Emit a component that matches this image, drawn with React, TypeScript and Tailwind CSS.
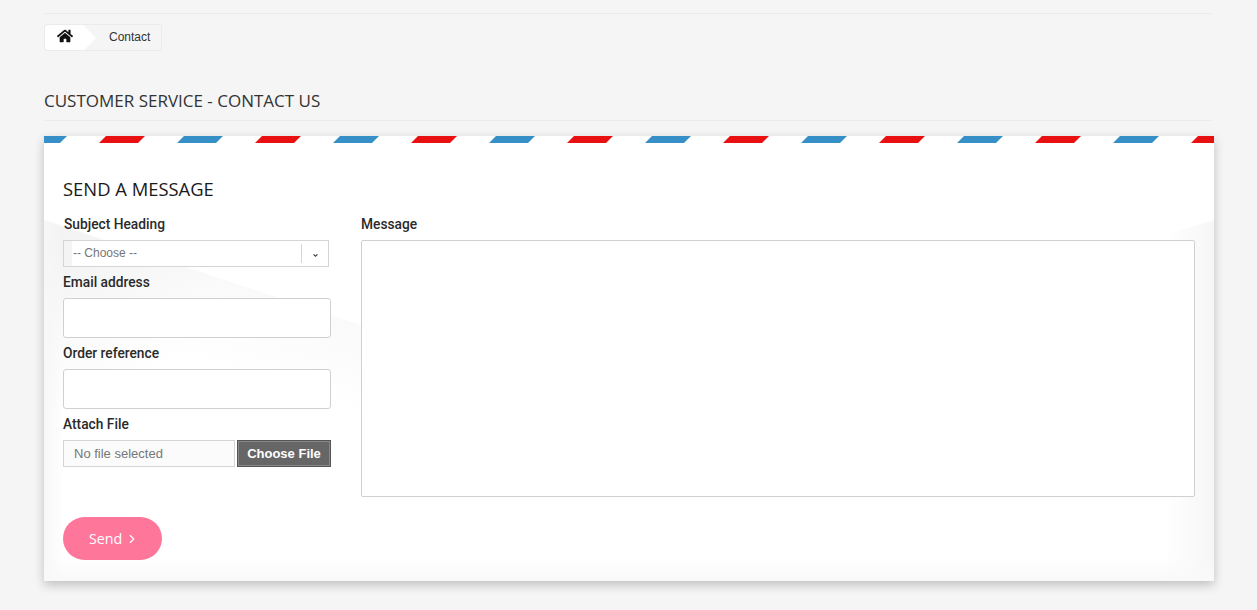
import { FaHome, FaAngleDown } from "react-icons/fa";
import { ChevronRight } from "lucide-react";

const sans = "font-['Liberation_Sans',Arial,sans-serif]";
const open = "font-['Open_Sans',sans-serif]";
const labelCls = "block h-[16px] leading-[16px] text-[13.75px] font-medium text-[#2a2a2a] font-['Roboto',sans-serif]";

function Stripes() {
  const items = [];
  for (let i = 0; i < 8; i++) {
    const b = i * 156 - 23;
    const r = i * 156 + 55;
    items.push(<polygon key={"b" + i} points={`${b},7 ${b + 7},0 ${b + 46},0 ${b + 39},7`} fill="#368fc6" />);
    items.push(<polygon key={"r" + i} points={`${r},7 ${r + 7},0 ${r + 46},0 ${r + 39},7`} fill="#e81010" />);
  }
  return (
    <svg width="1170" height="7" className="block">
      {items}
    </svg>
  );
}

function Wedge() {
  return (
    <svg width="1170" height="445" className="absolute left-0 top-0 pointer-events-none">
      <defs>
        <linearGradient id="l" x1="158" y1="136" x2="130" y2="220" gradientUnits="userSpaceOnUse">
          <stop offset="0" stopColor="#fafafa" />
          <stop offset="1" stopColor="#ffffff" />
        </linearGradient>
        <radialGradient id="c" cx="0" cy="84" r="190" gradientUnits="userSpaceOnUse">
          <stop offset="0" stopColor="#f2f2f2" stopOpacity="1" />
          <stop offset="1" stopColor="#f2f2f2" stopOpacity="0" />
        </radialGradient>
        <linearGradient id="l2" x1="0" y1="0" x2="20" y2="0" gradientUnits="userSpaceOnUse">
          <stop offset="0" stopColor="#f7f7f7" stopOpacity="1" />
          <stop offset="1" stopColor="#f7f7f7" stopOpacity="0" />
        </linearGradient>
        <linearGradient id="r" x1="1170" y1="0" x2="1120" y2="0" gradientUnits="userSpaceOnUse">
          <stop offset="0" stopColor="#f6f6f6" />
          <stop offset="1" stopColor="#ffffff" />
        </linearGradient>
        <linearGradient id="b" x1="0" y1="445" x2="0" y2="420" gradientUnits="userSpaceOnUse">
          <stop offset="0" stopColor="#f9f9f9" stopOpacity="1" />
          <stop offset="1" stopColor="#f9f9f9" stopOpacity="0" />
        </linearGradient>
      </defs>
      <polygon points="0,84 317,189 317,445 0,445" fill="url(#l)" />
      <polygon points="0,84 317,189 317,445 0,445" fill="url(#c)" />
      <polygon points="0,84 22,91 22,445 0,445" fill="url(#l2)" />
      <polygon points="1170,84 1102,105 1102,445 1170,445" fill="url(#r)" />
      <rect x="0" y="420" width="1170" height="25" fill="url(#b)" />
    </svg>
  );
}

export default function App() {
  return (
    <div className="min-h-[610px] bg-[#f5f5f5] pl-[44px] pr-[43px] pt-[13px]">
      <div className="w-[1168px] border-t border-[#ebebeb]" />
      <div className={`mt-[10px] flex h-[27px] w-[118px] items-center rounded-[3px] border border-[#ebebeb] ${sans}`}>
        <div className="relative flex h-full w-[39px] items-center justify-center rounded-l-[3px] bg-white">
          <FaHome className="ml-[1px] text-[16px] text-[#111] -mt-[4px]" />
        </div>
        <div className="h-0 w-0 border-y-[12.5px] border-l-[12px] border-y-transparent border-l-white" />
        <span className="ml-[13px] -mt-[2px] text-[12px] text-[#333]">Contact</span>
      </div>
      <div className="mt-[38px] h-[32px] w-[1168px] border-b border-[#ebebeb]">
        <h1 className={`text-[17px] leading-[24px] text-[#333] ${open}`}>CUSTOMER SERVICE - CONTACT US</h1>
      </div>
      <div className="relative mt-[15px] h-[445px] w-[1170px] bg-white shadow-[0_4px_10px_rgba(0,0,0,0.22)]">
        <Wedge />
        <div className="relative">
          <Stripes />
          <div className="px-[19px] pt-[34px]">
            <h2 className={`h-[24px] text-[18.4px] font-medium leading-[24px] text-[#1a1a1a] ${open}`}>SEND A MESSAGE</h2>
            <div className="mt-[15px] flex gap-[30px]">
              <div className="w-[268px]">
                <label className={`${labelCls} pl-[1px]`}>Subject Heading</label>
                <div className={`mt-[8px] flex h-[27px] w-[266px] items-center border border-[#d6d4d4] ${sans}`}>
                  <div className="ml-[8px] flex h-full flex-1 items-center bg-white">
                    <span className="-mt-[2px] flex-1 pl-[1px] text-[12px] text-[#777]">-- Choose --</span>
                    <div className="flex h-[19px] w-[27px] items-center justify-center border-l border-[#d6d4d4]">
                      <FaAngleDown className="mt-[3px] text-[7px] text-[#333]" />
                    </div>
                  </div>
                </div>
                <label className={`${labelCls} mt-[7px]`}>Email address</label>
                <div className="mt-[8px] h-[40px] rounded-[3px] border border-[#d0d0d0] bg-white" />
                <label className={`${labelCls} mt-[7px]`}>Order reference</label>
                <div className="mt-[8px] h-[40px] rounded-[3px] border border-[#d0d0d0] bg-white" />
                <label className={`${labelCls} mt-[7px]`}>Attach File</label>
                <div className="mt-[8px] flex h-[27px] gap-[2px]">
                  <div className={`flex h-full w-[172px] items-center border border-[#d6d4d4] bg-[#fbfbfb] pl-[10px] text-[13px] text-[#777] ${sans}`}>
                    <span className="mt-[1px]">No file selected</span>
                  </div>
                  <div className={`flex h-full w-[94px] items-center justify-center border border-[#555] bg-[#666] text-[13px] font-bold text-white shadow-[inset_0_0_0_1px_#888] ${sans}`}>
                    Choose File
                  </div>
                </div>
              </div>
              <div className="flex-1">
                <label className={labelCls}>Message</label>
                <div className="mt-[8px] h-[257px] rounded-[2px] border border-[#d0d0d0] bg-white" />
              </div>
            </div>
            <div className={`mt-[20px] flex h-[43px] w-[99px] items-center gap-[3px] rounded-full bg-[#ff769b] pl-[26px] text-[14.25px] text-white ${open}`}>
              <span>Send</span>
              <ChevronRight size={14} strokeWidth={2} className="mt-[1px]" />
            </div>
          </div>
        </div>
      </div>
    </div>
  );
}
